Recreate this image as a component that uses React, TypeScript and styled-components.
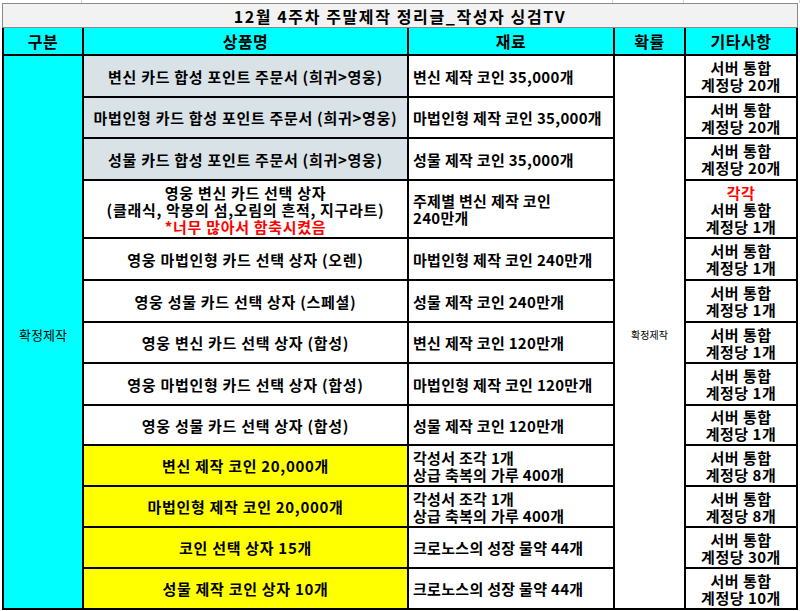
import React from "react";
import styled, { createGlobalStyle } from "styled-components";

const Global = createGlobalStyle`
  html, body { margin: 0; padding: 0; background: #ffffff; }
  body { font-family: "Noto Sans CJK KR", "Noto Sans", sans-serif; color: #000; }
`;

const COLS = "78px 323px 204px 69px 110px";

const Sheet = styled.div`
  width: 800px;
  height: 611px;
  overflow: hidden;
  background: #fff;
`;

const GridStrip = styled.div`
  display: grid;
  grid-template-columns: 82px 531px 71px 116px;
  height: 3px;
`;

const StripCell = styled.div`
  border-right: 1px solid #d4d4d4;
`;

const Title = styled.div`
  margin-left: 2px;
  width: 794px;
  height: 23px;
  border: 1px solid #8a8a8a;
  background: #f2f2f2;
  display: flex;
  align-items: center;
  justify-content: center;
  font-size: 16px;
  font-weight: 700;
  letter-spacing: 1.6px;
`;

const Table = styled.div`
  margin-left: 2px;
  width: 796px;
  box-sizing: border-box;
  display: grid;
  grid-template-columns: ${COLS};
  grid-template-rows: 26px 40px 39px 40px 56px 40px 40px 39px 40px 38px 39px 39px 39px 39px;
  gap: 2px;
  padding: 0 2px 2px 2px;
  background: #000;
`;

const Head = styled.div`
  background: #00ffff;
  display: flex;
  align-items: center;
  justify-content: center;
  font-size: 16px;
  font-weight: 700;
  letter-spacing: 0.5px;
`;

type Tone = "gray" | "white" | "yellow";
const toneBg: Record<Tone, string> = {
  gray: "#d9e2e7",
  white: "#ffffff",
  yellow: "#ffff00",
};

const Item = styled.div<{ $tone: Tone }>`
  background: ${(p) => toneBg[p.$tone]};
  display: flex;
  flex-direction: column;
  align-items: center;
  justify-content: center;
  text-align: center;
  font-size: 15px;
  font-weight: 700;
  line-height: 17px;
  letter-spacing: 0.7px;
  white-space: nowrap;
`;

const Material = styled.div`
  background: #fff;
  display: flex;
  flex-direction: column;
  justify-content: center;
  padding-left: 4px;
  font-size: 15px;
  font-weight: 700;
  line-height: 17px;
  letter-spacing: 0.3px;
  white-space: nowrap;
`;

const Note = styled.div`
  background: #fff;
  display: flex;
  flex-direction: column;
  align-items: center;
  justify-content: center;
  text-align: center;
  font-size: 15px;
  font-weight: 700;
  line-height: 17px;
  letter-spacing: 0.5px;
  white-space: nowrap;
`;

const Merged = styled.div<{ $col: number; $bg: string; $size: number }>`
  grid-column: ${(p) => p.$col};
  grid-row: 2 / span 13;
  background: ${(p) => p.$bg};
  display: flex;
  align-items: center;
  justify-content: center;
  font-size: ${(p) => p.$size}px;
  padding-top: 4px;
`;

const Red = styled.span`
  color: #ff0000;
`;

type Row = {
  tone: Tone;
  name: React.ReactNode;
  material: React.ReactNode;
  note: React.ReactNode;
};

const note = (n: string) => (
  <>
    <span>서버 통합</span>
    <span>계정당 {n}개</span>
  </>
);

const rows: Row[] = [
  { tone: "gray", name: "변신 카드 합성 포인트 주문서 (희귀>영웅)", material: "변신 제작 코인 35,000개", note: note("20") },
  { tone: "gray", name: "마법인형 카드 합성 포인트 주문서 (희귀>영웅)", material: "마법인형 제작 코인 35,000개", note: note("20") },
  { tone: "gray", name: "성물 카드 합성 포인트 주문서 (희귀>영웅)", material: "성물 제작 코인 35,000개", note: note("20") },
  {
    tone: "white",
    name: (
      <>
        <span>영웅 변신 카드 선택 상자</span>
        <span>(클래식, 악몽의 섬,오림의 흔적, 지구라트)</span>
        <Red>*너무 많아서 함축시켰음</Red>
      </>
    ),
    material: (
      <>
        <span>주제별 변신 제작 코인</span>
        <span>240만개</span>
      </>
    ),
    note: (
      <>
        <Red>각각</Red>
        <span>서버 통합</span>
        <span>계정당 1개</span>
      </>
    ),
  },
  { tone: "white", name: "영웅 마법인형 카드 선택 상자 (오렌)", material: "마법인형 제작 코인 240만개", note: note("1") },
  { tone: "white", name: "영웅 성물 카드 선택 상자 (스페셜)", material: "성물 제작 코인 240만개", note: note("1") },
  { tone: "white", name: "영웅 변신 카드 선택 상자 (합성)", material: "변신 제작 코인 120만개", note: note("1") },
  { tone: "white", name: "영웅 마법인형 카드 선택 상자 (합성)", material: "마법인형 제작 코인 120만개", note: note("1") },
  { tone: "white", name: "영웅 성물 카드 선택 상자 (합성)", material: "성물 제작 코인 120만개", note: note("1") },
  {
    tone: "yellow",
    name: "변신 제작 코인 20,000개",
    material: (
      <>
        <span>각성서 조각 1개</span>
        <span>상급 축복의 가루 400개</span>
      </>
    ),
    note: note("8"),
  },
  {
    tone: "yellow",
    name: "마법인형 제작 코인 20,000개",
    material: (
      <>
        <span>각성서 조각 1개</span>
        <span>상급 축복의 가루 400개</span>
      </>
    ),
    note: note("8"),
  },
  { tone: "yellow", name: "코인 선택 상자 15개", material: "크로노스의 성장 물약 44개", note: note("30") },
  { tone: "yellow", name: "성물 제작 코인 상자 10개", material: "크로노스의 성장 물약 44개", note: note("10") },
];

export default function App() {
  return (
    <>
      <Global />
      <Sheet>
        <GridStrip>
          <StripCell />
          <StripCell />
          <StripCell />
          <StripCell />
        </GridStrip>
        <Title>12월 4주차 주말제작 정리글_작성자 싱검TV</Title>
        <Table>
          <Head>구분</Head>
          <Head>상품명</Head>
          <Head>재료</Head>
          <Head>확률</Head>
          <Head>기타사항</Head>
          <Merged $col={1} $bg="#00ffff" $size={13}>
            확정제작
          </Merged>
          <Merged $col={4} $bg="#ffffff" $size={10}>
            확정제작
          </Merged>
          {rows.map((r, i) => (
            <React.Fragment key={i}>
              <Item $tone={r.tone} style={{ gridColumn: 2, gridRow: i + 2 }}>
                {r.name}
              </Item>
              <Material style={{ gridColumn: 3, gridRow: i + 2 }}>{r.material}</Material>
              <Note style={{ gridColumn: 5, gridRow: i + 2 }}>{r.note}</Note>
            </React.Fragment>
          ))}
        </Table>
      </Sheet>
    </>
  );
}
